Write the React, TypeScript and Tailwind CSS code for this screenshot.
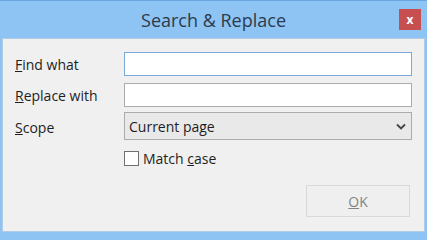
export default function App() {
  const font = { fontFamily: '"Open Sans", "Noto Sans", sans-serif' };
  return (
    <div
      className="w-[427px] h-[240px] bg-[#8ec4f4] border-t border-[#6aa6e0] flex flex-col text-[#1e1e1e]"
      style={font}
    >
      {/* title bar */}
      <div className="h-[37px] flex items-center relative">
        <div className="flex-1 text-center text-[18px] text-[#2c3b4c] leading-none">Search &amp; Replace</div>
        <button className="absolute right-[6px] top-[8px] w-[22px] h-[21px] bg-[#c74f4f] text-white text-[12px] font-bold leading-none flex items-center justify-center">
          x
        </button>
      </div>
      {/* client area */}
      <div className="mx-[2px] h-[194px] bg-[#f0f0f0] border border-[#b3cce6] flex flex-col px-[12px] pt-[13px] text-[14px]">
        <div className="grid grid-cols-[109px_1fr] gap-y-[7px] items-center">
          <label>
            <span className="underline">F</span>ind what
          </label>
          <input className="h-[24px] bg-white border border-[#7ca9db] outline-none" />
          <label>
            <span className="underline">R</span>eplace with
          </label>
          <input className="h-[24px] bg-white border border-[#acacac] outline-none" />
          <label>
            <span className="underline">S</span>cope
          </label>
          <div className="h-[28px] -mt-[2px] bg-[#e9e9e9] border border-[#acacac] flex items-center justify-between pl-[4px] pr-[5px]">
            <span>Current page</span>
            <svg width="10" height="7" viewBox="0 0 10 7">
              <path d="M1 1.5 L5 5.5 L9 1.5" stroke="#444" strokeWidth="1.8" fill="none" />
            </svg>
          </div>
          <div />
          <div className="flex items-center gap-[4px] mt-[1px]">
            <span className="w-[15px] h-[15px] bg-white border border-[#707070]" />
            <span>
              Match <span className="underline">c</span>ase
            </span>
          </div>
        </div>
        <div className="flex justify-end mt-[16px] mr-[2px]">
          <button className="w-[104px] h-[32px] border border-[#d9d9d9] bg-[#efefef] text-[#838383] text-[14px]">
            <span className="underline">O</span>K
          </button>
        </div>
      </div>
    </div>
  );
}
